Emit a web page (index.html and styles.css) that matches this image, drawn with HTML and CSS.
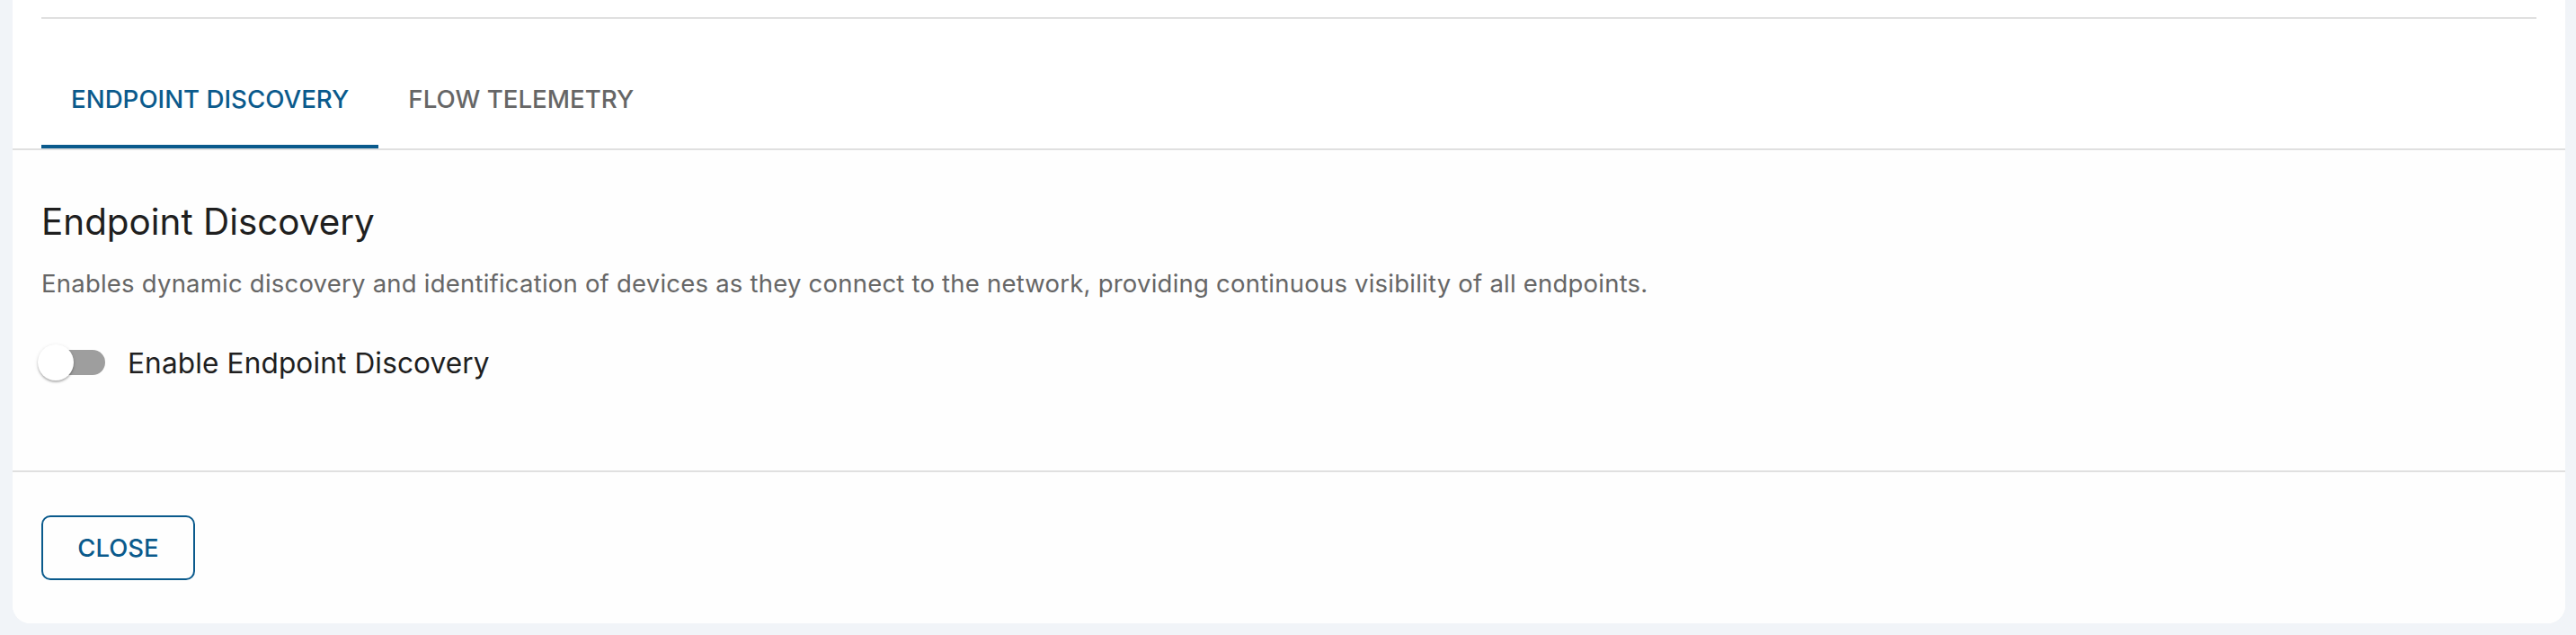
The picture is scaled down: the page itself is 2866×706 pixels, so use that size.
FILE: index.html
```html
<!DOCTYPE html>
<html lang="en">
<head>
<meta charset="utf-8">
<title>Endpoint Discovery</title>
<link rel="stylesheet" href="styles.css">
</head>
<body>
<div class="panel">
  <div class="top-rule"></div>
  <div class="tabs">
    <div class="tab tab-active">ENDPOINT DISCOVERY</div>
    <div class="tab">FLOW TELEMETRY</div>
  </div>
  <div class="body">
    <div class="content">
      <h2 class="title">Endpoint Discovery</h2>
      <p class="desc">Enables dynamic discovery and identification of devices as they connect to the network, providing continuous visibility of all endpoints.</p>
      <div class="toggle-row">
        <span class="switch"><span class="track"></span><span class="thumb"></span></span>
        <span class="toggle-label">Enable Endpoint Discovery</span>
      </div>
    </div>
    <div class="footer">
      <button class="btn-close">CLOSE</button>
    </div>
  </div>
</div>
</body>
</html>
```

FILE: styles.css
```css
html, body {
  margin: 0;
  padding: 0;
}
body {
  background: #f1f4f8;
  font-family: Inter, "Noto Sans", "Liberation Sans", sans-serif;
  height: 706px;
  overflow: hidden;
}
.panel {
  margin: 0 12px 0 14px;
  height: 693px;
  background: #ffffff;
  border-radius: 0 0 20px 20px;
  display: flex;
  flex-direction: column;
  overflow: hidden;
}
.top-rule {
  margin: 19px 32px 0;
  border-top: 2px solid #e0e0e0;
}
.tabs {
  margin-top: 34px;
  padding-left: 32px;
  display: flex;
  border-bottom: 2px solid #e0e0e0;
}
.tab {
  height: 110px;
  padding: 4px 33px 0;
  display: flex;
  align-items: center;
  box-sizing: border-box;
  font-size: 27.7px;
  font-weight: 500;
  color: #666666;
  border-bottom: 4px solid transparent;
}
.tab-active {
  color: #0a5a8c;
  border-bottom-color: #0a5a8c;
}
.body {
  flex: 1;
  background: #fefefe;
  display: flex;
  flex-direction: column;
}
.content {
  padding: 56px 32px 0;
  height: 358px;
  box-sizing: border-box;
  border-bottom: 2px solid #e0e0e0;
}
.title {
  margin: 0;
  font-size: 40.4px;
  font-weight: 400;
  line-height: 1.21;
  color: #1f1f1f;
}
.desc {
  margin: 27px 0 0;
  font-size: 27.5px;
  letter-spacing: 0.22px;
  line-height: 1.21;
  color: #666666;
}
.toggle-row {
  margin-top: 51px;
  display: flex;
  align-items: center;
  height: 40px;
}
.switch {
  position: relative;
  width: 75px;
  height: 40px;
  margin-left: -4px;
  flex: none;
}
.track {
  position: absolute;
  left: 5px;
  top: 6px;
  width: 70px;
  height: 28px;
  border-radius: 14px;
  background: #9e9e9e;
}
.thumb {
  position: absolute;
  left: 0;
  top: 0;
  width: 40px;
  height: 40px;
  border-radius: 50%;
  background: #ffffff;
  box-shadow: 0 2px 2px rgba(0,0,0,0.22), 0 1px 4px rgba(0,0,0,0.12);
}
.toggle-label {
  margin-left: 25px;
  font-size: 31.6px;
  letter-spacing: 0.12px;
  color: #1f1f1f;
}
.footer {
  padding: 48px 32px 0;
}
.btn-close {
  width: 171px;
  height: 72px;
  border: 2px solid #0a5a8c;
  border-radius: 10px;
  background: transparent;
  color: #0a5a8c;
  font-family: Inter, "Noto Sans", "Liberation Sans", sans-serif;
  font-size: 27.5px;
  font-weight: 500;
  padding: 0;
  cursor: pointer;
}
```
